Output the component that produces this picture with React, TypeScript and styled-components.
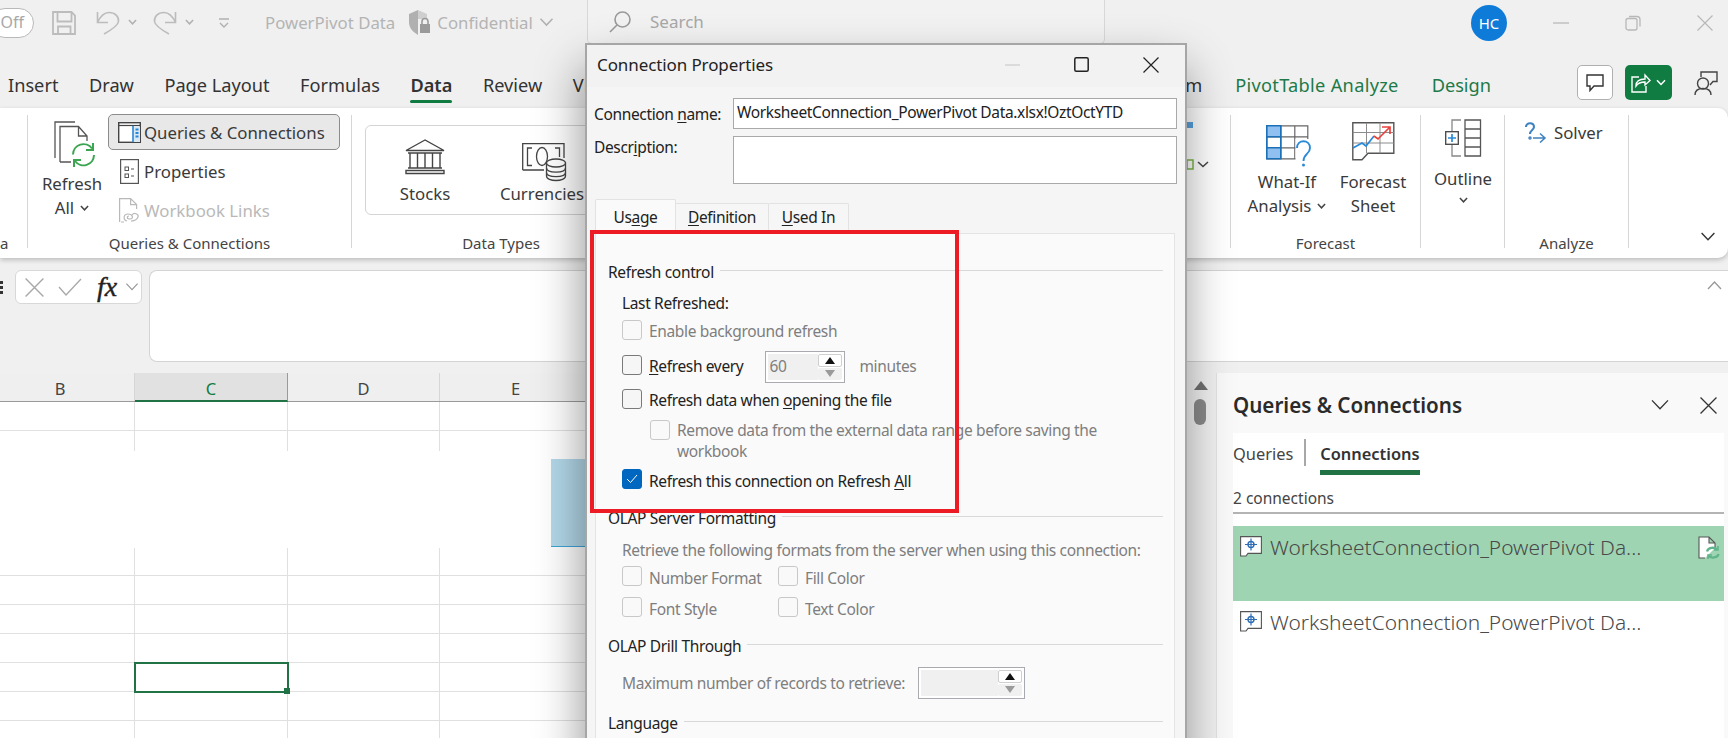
import React from "react"
import styled, { createGlobalStyle } from "styled-components"

const FONT = `"Noto Sans", "Open Sans", sans-serif`

const Global = createGlobalStyle`
  html, body { margin: 0; padding: 0; background: #f0f0f0; }
  body { font-family: ${FONT}; color: #333; overflow: hidden; }
  * { box-sizing: border-box; }
  svg { display: block; flex: none; }
`

const Page = styled.div`
  position: relative;
  width: 1728px;
  height: 738px;
  overflow: hidden;
  background: #f0f0f0;
  display: flex;
  flex-direction: column;
`

// Title bar
const TitleBar = styled.div`
  height: 45px;
  display: flex;
  flex: none;
`
const TitleLeft = styled.div`
  width: 587px;
  display: flex;
  align-items: center;
  color: #b4b4b4;
  font-size: 16.8px;
`
const AutoSave = styled.div`
  width: 44px;
  height: 30px;
  margin-left: -10px;
  border: 1px solid #b9b9b9;
  border-radius: 15px;
  background: #fff;
  color: #a8a8a8;
  font-size: 16px;
  line-height: 27px;
  text-align: right;
  padding-right: 9px;
`
const Slot = styled.div<{ $ml: number }>`
  margin-left: ${p => p.$ml}px;
  white-space: nowrap;
`
const SearchBox = styled.div`
  width: 518px;
  height: 44px;
  background: #f2f2f2;
  border: 1px solid #d8d8d8;
  border-top: none;
  border-radius: 0 0 5px 5px;
  display: flex;
  align-items: center;
  padding-left: 21px;
  gap: 19px;
  color: #a8a8a8;
  font-size: 17px;
`
const TitleRight = styled.div`
  flex: 1;
  display: flex;
  align-items: center;
  justify-content: flex-end;
  padding-right: 15px;
  gap: 56px;
`
const Avatar = styled.div`
  width: 36px;
  height: 36px;
  border-radius: 50%;
  background: #0f7bd8;
  color: #fff;
  font-size: 15px;
  line-height: 36px;
  text-align: center;
  margin-right: -10px;
`

// Tabs
const TabBar = styled.div`
  height: 63px;
  flex: none;
  display: flex;
  justify-content: space-between;
  padding: 20px 9px 0 8px;
`
const TabGroup = styled.div<{ $gap: number }>`
  display: flex;
  gap: ${p => p.$gap}px;
  align-items: flex-start;
`
const Tab = styled.div<{ $active?: boolean; $green?: boolean; $ls?: number }>`
  position: relative;
  font-size: 18.2px;
  line-height: 40px;
  letter-spacing: ${p => p.$ls ?? 0}px;
  white-space: nowrap;
  color: ${p => (p.$green ? "#1d7a48" : "#333")};
  font-weight: ${p => (p.$active ? 600 : 400)};
  ${p => p.$active && `
    &::after {
      content: "";
      position: absolute;
      left: 0;
      right: 0;
      top: 35px;
      height: 3px;
      background: #107c41;
      border-radius: 2px;
    }
  `}
`
const CommentBtn = styled.div`
  width: 36px;
  height: 35px;
  background: #fff;
  border: 1px solid #b0b0b0;
  border-radius: 5px;
  display: flex;
  align-items: center;
  justify-content: center;
`
const ShareBtn = styled.div`
  width: 47px;
  height: 35px;
  margin-left: 12px;
  background: #107c41;
  border-radius: 5px;
  display: flex;
  align-items: center;
  justify-content: center;
  gap: 5px;
`
const PersonSlot = styled.div`
  margin: 6px 0 0 22px;
`
const TabTools = styled.div`
  display: flex;
  align-items: flex-start;
  margin-left: 53px;
`

// Ribbon
const Ribbon = styled.div`
  position: relative;
  height: 150px;
  flex: none;
  background: #fff;
  border-radius: 0 10px 10px 0;
  box-shadow: 0 2px 5px rgba(0, 0, 0, 0.22);
  padding: 7px 0 10px;
  display: flex;
  font-size: 16.8px;
  color: #3a3a3a;
`
const Group = styled.div<{ $w: number; $pl?: number; $last?: boolean }>`
  width: ${p => p.$w}px;
  flex: none;
  height: 133px;
  padding-left: ${p => p.$pl ?? 0}px;
  display: flex;
  flex-direction: column;
  border-right: ${p => (p.$last ? "none" : "1px solid #d6d6d6")};
`
const GroupBody = styled.div`
  display: flex;
  flex: 1;
  min-height: 0;
`
const GroupLabel = styled.div<{ $ml?: number; $left?: boolean }>`
  flex: none;
  height: 18px;
  margin: 0 0 -4px ${p => p.$ml ?? 0}px;
  line-height: 18px;
  font-size: 15px;
  text-align: ${p => (p.$left ? "left" : "center")};
  color: #444;
  white-space: nowrap;
`
const BigButton = styled.div<{ $w: number; $ml?: number }>`
  width: ${p => p.$w}px;
  margin-left: ${p => p.$ml ?? 0}px;
  flex: none;
  display: flex;
  flex-direction: column;
  align-items: center;
  line-height: 24px;
  text-align: center;
  white-space: nowrap;
`
const IconBox = styled.div<{ $h: number; $pt: number; $dx?: number }>`
  height: ${p => p.$h}px;
  padding-top: ${p => p.$pt}px;
  margin-left: ${p => p.$dx ?? 0}px;
  flex: none;
`
const CaretLine = styled.div<{ $mt?: number }>`
  display: flex;
  align-items: center;
  justify-content: center;
  gap: 6px;
  margin-top: ${p => p.$mt ?? 0}px;
`
const SmallCol = styled.div`
  margin-left: 8px;
  margin-top: -1px;
  display: flex;
  flex-direction: column;
  gap: 3px;
`
const SmallButton = styled.div<{ $on?: boolean; $off?: boolean }>`
  width: 232px;
  height: 36px;
  display: flex;
  align-items: center;
  padding-left: 5px;
  white-space: nowrap;
  border-radius: 5px;
  border: 1px solid ${p => (p.$on ? "#8c8c8c" : "transparent")};
  background: ${p => (p.$on ? "#e8e8e8" : "transparent")};
  color: ${p => (p.$off ? "#b9b9b9" : "#3a3a3a")};
`
const SmallIcon = styled.div`
  width: 30px;
  flex: none;
  display: flex;
  justify-content: center;
`
const SolverSlot = styled.div`
  margin: -1px 0 0 20px;
  height: 36px;
  display: flex;
  align-items: center;
  gap: 7px;
`
const SubGroup = styled.div`
  width: 298px;
  display: flex;
  flex-direction: column;
  height: 100%;
`
const TypesCard = styled.div`
  margin: 10px 0 0 13px;
  width: 272px;
  height: 90px;
  border: 1px solid #d4d4d4;
  border-radius: 6px;
  display: flex;
  padding-left: 24px;
  gap: 47px;
`
const TypesItem = styled.div`
  display: flex;
  flex-direction: column;
  align-items: center;
  width: 70px;
`
const TypesLabel = styled(GroupLabel)`
  margin-top: auto;
`
const BehindBits = styled.div`
  margin-left: auto;
`
const CollapseSlot = styled.div`
  position: absolute;
  right: 12px;
  bottom: 16px;
`

// Formula row
const FormulaRow = styled.div`
  height: 115px;
  flex: none;
  padding-top: 12px;
  display: flex;
`
const Dots = styled.div`
  width: 15px;
  padding-top: 11px;
`
const FxBox = styled.div`
  width: 127px;
  height: 34px;
  background: #fff;
  border: 1px solid #d8d8d8;
  border-radius: 6px;
  display: flex;
  align-items: center;
  padding-left: 9px;
`
const FxLabel = styled.span`
  font-family: "Liberation Serif", serif;
  font-style: italic;
  font-weight: 400;
  font-size: 28px;
  line-height: 30px;
  color: #222;
  -webkit-text-stroke: 0.4px #222;
  margin: 0 8px 0 15px;
`
const FormulaInput = styled.div`
  margin-left: 7px;
  flex: 1;
  height: 92px;
  background: #fff;
  border: 1px solid #d4d4d4;
  border-right: none;
  border-radius: 8px 0 0 8px;
  display: flex;
  justify-content: flex-end;
  padding: 10px 6px 0 0;
`

// Sheet
const Workspace = styled.div`
  flex: 1;
  min-height: 0;
  display: flex;
`
const Sheet = styled.div`
  position: relative;
  width: 1187px;
  flex: none;
  overflow: hidden;
  background: #fff;
`
const HeaderRow = styled.div`
  display: flex;
  height: 29px;
  background: #efefef;
  border-bottom: 1px solid #9a9a9a;
`
const HeaderCell = styled.div<{ $w: number; $on?: boolean; $pr?: number }>`
  width: ${p => p.$w}px;
  flex: none;
  text-align: center;
  font-size: 16.5px;
  line-height: 31px;
  padding-right: ${p => p.$pr ?? 0}px;
  border-right: 1px solid ${p => (p.$on ? "#9a9a9a" : "#d6d6d6")};
  color: ${p => (p.$on ? "#107c41" : "#444")};
  background: ${p => (p.$on ? "#e1e1e1" : "transparent")};
  ${p => p.$on && "border-bottom: 2px solid #217346; height: 29px; margin-bottom: -1px;"}
`
const Row = styled.div`
  display: flex;
  height: 29px;
  &:first-of-type { height: 28px; }
`
const Cell = styled.div<{ $w: number; $sel?: boolean }>`
  position: relative;
  width: ${p => p.$w}px;
  flex: none;
  border-right: 1px solid #e0e0e0;
  border-bottom: 1px solid #e0e0e0;
  ${p => p.$sel && `
    outline: 2px solid #217346;
    outline-offset: -1px;
    z-index: 1;
    &::after {
      content: "";
      position: absolute;
      right: -3px;
      bottom: -3px;
      width: 6px;
      height: 6px;
      background: #217346;
    }
  `}
`
const WhiteOut = styled.div`
  position: absolute;
  left: 0;
  top: 78px;
  width: 551px;
  height: 97px;
  background: #fff;
  z-index: 2;
`
const HeaderBlock = styled.div`
  position: absolute;
  left: 551px;
  top: 86px;
  width: 50px;
  height: 88px;
  background: #b4d9ea;
  border-bottom: 1px solid #3fa5d6;
  z-index: 2;
`
const ScrollStrip = styled.div`
  width: 29px;
  flex: none;
  background: #f0f0f0;
  padding: 8px 0 0 7px;
`
const ScrollThumb = styled.div`
  width: 12px;
  height: 26px;
  margin-top: 9px;
  background: #8a8a8a;
  border-radius: 6px;
`

// Task pane
const TaskPane = styled.div`
  flex: 1;
  background: #f9f9f9;
  border-left: 1px solid #e2e2e2;
  padding-left: 16px;
  display: flex;
  flex-direction: column;
`
const PaneHead = styled.div`
  height: 60px;
  display: flex;
  align-items: center;
  padding: 4px 11px 0 0;
`
const PaneTitle = styled.div`
  flex: 1;
  font-size: 20.6px;
  font-weight: 600;
  color: #2b2b2b;
  white-space: nowrap;
`
const PaneIcons = styled.div`
  display: flex;
  gap: 30px;
  align-items: center;
`
const PaneBody = styled.div`
  flex: 1;
  margin-right: 4px;
  background: #fff;
`
const PaneTabs = styled.div`
  height: 42px;
  display: flex;
  align-items: flex-start;
  padding-top: 6px;
  font-size: 16.4px;
`
const PaneTab = styled.div<{ $on?: boolean }>`
  height: 36px;
  line-height: 30px;
  white-space: nowrap;
  font-weight: ${p => (p.$on ? 600 : 400)};
  color: ${p => (p.$on ? "#333" : "#444")};
  ${p => p.$on && "border-bottom: 5px solid #217346;"}
`
const PaneDivider = styled.div`
  width: 2px;
  height: 27px;
  background: #a8a8a8;
  margin: 0 14px 0 11px;
`
const PaneCount = styled.div`
  height: 39px;
  line-height: 46px;
  font-size: 15.5px;
  color: #444;
  border-bottom: 2px solid #b4b4b4;
`
const ConnList = styled.div`
  margin-top: 12px;
`
const ConnRow = styled.div<{ $on?: boolean }>`
  height: 75px;
  display: flex;
  align-items: flex-start;
  padding: 10px 4px 0 7px;
  gap: 8px;
  background: ${p => (p.$on ? "#9fd4b3" : "transparent")};
`
const ConnText = styled.div`
  flex: 1;
  font-size: 20.9px;
  line-height: 22px;
  font-weight: 300;
  color: #4a4a4a;
  white-space: nowrap;
`

// Dialog
const Dialog = styled.div`
  position: absolute;
  left: 585px;
  top: 43px;
  width: 602px;
  height: 720px;
  background: #f5f5f5;
  border: 2px solid #a6a6a6;
  box-shadow: -2px 24px 44px rgba(0, 0, 0, 0.42);
  z-index: 5;
  font-size: 15.5px;
  letter-spacing: -0.35px;
  color: #222;
`
const DialogHead = styled.div`
  height: 42px;
  padding: 0 0 3px 10px;
  background: #f2f2f2;
  display: flex;
  align-items: center;
`
const DialogTitle = styled.div`
  flex: 1;
  font-size: 17px;
  letter-spacing: -0.1px;
  white-space: nowrap;
`
const DialogBtns = styled.div`
  display: flex;
  align-items: center;
  gap: 54px;
  padding-right: 26px;
`
const Fields = styled.div`
  padding: 11px 8px 0 7px;
  display: grid;
  grid-template-columns: 139px 1fr;
  row-gap: 7px;
`
const FieldLabel = styled.div<{ $top?: boolean }>`
  white-space: nowrap;
  height: ${p => (p.$top ? 23 : 31)}px;
  line-height: ${p => (p.$top ? 23 : 33)}px;
`
const TextInput = styled.div<{ $h: number }>`
  height: ${p => p.$h}px;
  background: #fff;
  border: 1px solid #a9a9a9;
  padding-left: 3px;
  line-height: 27px;
  white-space: nowrap;
`
const DlgTabs = styled.div`
  display: flex;
  align-items: flex-end;
  margin: 16px 0 -1px 8px;
  height: 34px;
  position: relative;
`
const DlgTab = styled.div<{ $on?: boolean; $w: number }>`
  width: ${p => p.$w}px;
  height: ${p => (p.$on ? 35 : 31)}px;
  text-align: center;
  line-height: ${p => (p.$on ? 35 : 27)}px;
  background: ${p => (p.$on ? "#fafafa" : "#f6f6f6")};
  border: 1px solid #e2e2e2;
  border-bottom: none;
  border-radius: 2px 2px 0 0;
  margin-left: ${p => (p.$on ? 0 : -1)}px;
  z-index: ${p => (p.$on ? 1 : 0)};
`
const Panel = styled.div`
  margin: 0 10px 0 8px;
  height: 520px;
  background: #fafafa;
  border: 1px solid #e4e4e4;
  padding: 0 11px 0 13px;
`
const Key = styled.span`
  text-decoration: underline;
  text-underline-offset: 2px;
  text-decoration-thickness: 1px;
`
const SectionHead = styled.div<{ $mt: number }>`
  margin-top: ${p => p.$mt}px;
  margin-left: -1px;
  height: 24px;
  display: flex;
  align-items: center;
  gap: 6px;
  line-height: 24px;
  white-space: nowrap;
  &::after {
    content: "";
    flex: 1;
    height: 1px;
    background: #d8d8d8;
    margin-top: -3px;
  }
`
const Line = styled.div<{ $mt: number; $pl?: number; $muted?: boolean; $lh?: number }>`
  margin-top: ${p => p.$mt}px;
  margin-left: ${p => p.$pl ?? 13}px;
  min-height: 24px;
  display: flex;
  align-items: flex-start;
  line-height: ${p => p.$lh ?? 24}px;
  white-space: nowrap;
  color: ${p => (p.$muted ? "#7e7e7e" : "#222")};
`
const Box = styled.div<{ $off?: boolean; $on?: boolean }>`
  width: 20px;
  height: 20px;
  flex: none;
  margin-right: 7px;
  border-radius: 3px;
  border: 1px solid ${p => (p.$on ? "#0067c0" : p.$off ? "#c8c8c8" : "#7a7a7a")};
  background: ${p => (p.$on ? "#0067c0" : p.$off ? "#f9f9f9" : "#f6f6f6")};
  display: flex;
  align-items: center;
  justify-content: center;
`
const TwoLines = styled.div`
  line-height: 21px;
`
const Spin = styled.div<{ $w: number; $ml: number }>`
  width: ${p => p.$w}px;
  height: 32px;
  margin: -4px 0 -4px ${p => p.$ml}px;
  flex: none;
  border: 1px solid #a9a9b0;
  background: #fff;
  padding: 2px;
  display: flex;
`
const SpinField = styled.div`
  flex: 1;
  background: #f0f0f0;
  color: #7e7e7e;
  line-height: 24px;
  padding-left: 1px;
`
const SpinBtns = styled.div`
  width: 24px;
  display: flex;
  flex-direction: column;
  gap: 1px;
`
const SpinBtn = styled.div<{ $down?: boolean }>`
  flex: 1;
  background: ${p => (p.$down ? "#f0f0f0" : "#fff")};
  border: 1px solid ${p => (p.$down ? "#f0f0f0" : "#cfcfcf")};
  border-radius: 2px;
  display: flex;
  align-items: center;
  justify-content: center;
`
const Arrow = styled.div<{ $down?: boolean }>`
  width: 0;
  height: 0;
  border-left: 5px solid transparent;
  border-right: 5px solid transparent;
  ${p => (p.$down ? "border-top: 7px solid #9a9a9a;" : "border-bottom: 7px solid #111;")}
`
const CheckGrid = styled.div<{ $mt: number }>`
  margin: ${p => p.$mt}px 0 0 13px;
  display: grid;
  grid-template-columns: 156px 1fr;
  grid-auto-rows: 24px;
  row-gap: 7px;
  color: #7e7e7e;
`
const CheckItem = styled.div`
  display: flex;
  line-height: 24px;
  white-space: nowrap;
`
const Muted = styled.span`
  color: #7e7e7e;
  margin-left: 14px;
`
const Highlight = styled.div`
  position: absolute;
  left: 590px;
  top: 230px;
  width: 369px;
  height: 283px;
  border: 4px solid #ed1c24;
  z-index: 6;
`

const Caret = ({ c = "#555", s = 10, w = 1.5 }: { c?: string; s?: number; w?: number }) => (
  <svg width={s} height={s * 0.7} viewBox="0 0 10 7" fill="none" stroke={c} strokeWidth={w}>
    <path d="M1 1.200 5 5.400 9 1.200" vectorEffect="non-scaling-stroke" />
  </svg>
)
const Cross = ({ c, s }: { c: string; s: number }) => (
  <svg width={s} height={s} viewBox="0 0 16 16" fill="none" stroke={c} strokeWidth="1.200"><path d="M.5.5l15 15M15.500.5l-15 15" /></svg>
)

const SaveIcon = () => (
  <svg width="24" height="24" viewBox="0 0 24 24" fill="none" stroke="#bcbcbc" strokeWidth="1.800"><path d="M1 1h18.500L23 4.500V23H1z" /><path d="M5.500 1v9.500h14V1M6 23v-7.500h12.500V23" /></svg>
)
const UndoIcon = ({ flip }: { flip?: boolean }) => (
  <svg width="24" height="24" viewBox="0 0 24 24" fill="none" stroke="#bcbcbc" strokeWidth="1.600" style={flip ? { transform: "scaleX(-1)" } : undefined}>
    <path d="M1.500 1v10.500H12M1.500 11.500C5 4 9 1.500 13 1.500c6 0 10 4 9.500 9C22 14 17 18 8 23" />
  </svg>
)
const QatIcon = () => (
  <svg width="12" height="12" viewBox="0 0 12 12" fill="none" stroke="#b0b0b0" strokeWidth="1.400"><path d="M1 2h10M2 6l4 4 4-4" /></svg>
)
const ShieldIcon = () => (
  <svg width="23" height="27" viewBox="0 0 23 27"><path d="M10 1 1 5v8c0 6 4 10 9 13V1z" fill="#b0b0b0" /><path d="M10 1l9 4v5h-9z" fill="#cfcfcf" /><path d="M12 15h10v9H12z" fill="#9a9a9a" /><path d="M14 15v-2.500c0-4 6-4 6 0V15" fill="none" stroke="#9a9a9a" strokeWidth="1.600" /></svg>
)
const SearchIcon = () => (
  <svg width="22" height="22" viewBox="0 0 22 22" fill="none" stroke="#9a9a9a" strokeWidth="1.600"><circle cx="13.500" cy="8.500" r="7.500" /><path d="M8 14 1 21" /></svg>
)
const RestoreIcon = () => (
  <svg width="16" height="16" viewBox="0 0 16 16" fill="none" stroke="#b8b8b8" strokeWidth="1.300"><rect x="1" y="3.500" width="11" height="11.500" rx="2" /><path d="M4 1.500h8c1.700 0 3 1.300 3 3v7" /></svg>
)
const CommentIcon = () => (
  <svg width="18" height="18" viewBox="0 0 18 18" fill="none" stroke="#333" strokeWidth="1.400"><path d="M1 1h16v11H8l-4 4.500V12H1z" /></svg>
)
const ShareIcon = () => (
  <svg width="20" height="20" viewBox="0 0 20 20" fill="none" stroke="#fff" strokeWidth="1.400"><path d="M8 4H1v15h14v-6" /><path d="M5 13c0-5 4-7 9-7V2l5 5.500L14 12V9c-4 0-7 1-9 4z" /></svg>
)
const PersonIcon = () => (
  <svg width="25" height="24" viewBox="0 0 25 24" fill="none" stroke="#444" strokeWidth="1.400"><path d="M7 6V1h16v9.500h-4l-3 3.500" /><circle cx="9" cy="12.500" r="5.500" fill="#f0f0f0" /><path d="M1 24c0-4 3-6.500 8-6.500s8 2.500 8 6.500" /></svg>
)
const RefreshAllIcon = () => (
  <svg width="44" height="47" viewBox="0 0 44 47" fill="none" stroke="#555" strokeWidth="1.300">
    <path d="M1 37V1h20M6 41V5.500h18.500L33 15v5M24.500 5.500V15H33M6 41h11" />
    <g stroke="#3ca552" strokeWidth="2">
      <path d="M19 33.500a10.500 10.500 0 0 1 19-6" /><path d="M39 22v7h-7" />
      <path d="M40 34a10.500 10.500 0 0 1-19 6" /><path d="M20 46v-7h7" />
    </g>
  </svg>
)
const PaneIcon = () => (
  <svg width="23" height="21" viewBox="0 0 23 21" fill="none"><rect x=".7" y=".7" width="21.600" height="19.600" fill="#fff" stroke="#444" strokeWidth="1.400" /><path d="M.6 3.500h21.800" stroke="#444" strokeWidth="1.200" /><rect x="15" y="4.500" width="7" height="15.500" fill="#d7e8f7" /><path d="M15 4v16" stroke="#2a86d5" strokeWidth="1.600" /><path d="M17.500 7.500h3M17.500 11h3M17.500 14.500h3" stroke="#2a86d5" strokeWidth="1.800" /></svg>
)
const PropsIcon = () => (
  <svg width="19" height="25" viewBox="0 0 19 25" fill="none" stroke="#555" strokeWidth="1.200"><rect x=".6" y=".6" width="17.800" height="23.800" /><rect x="5" y="8" width="3.500" height="3.500" strokeWidth="1" /><rect x="5" y="15" width="3.500" height="3.500" strokeWidth="1" /><path d="M11 10h3M11 17h3" /></svg>
)
const LinksIcon = () => (
  <svg width="21" height="25" viewBox="0 0 21 25" fill="none" stroke="#b9b9b9" strokeWidth="1.200"><path d="M.6 24V.6h11l6 6V11M11.600.6v6h6" /><path d="M2 24h3M8 23c-4-1-4-7 1-7s6 5 2 5-3-3-1-3M13 17c2-3 7-1 6 2s-5 4-7 4" /></svg>
)
const StocksIcon = () => (
  <svg width="41" height="36" viewBox="0 0 41 36" fill="none" stroke="#444" strokeWidth="1.400"><path d="M20 1 1 11.500h38z" /><path d="M3 14h34M5 14v15M12.500 14v15M20 14v15M27.500 14v15M35 14v15M3 29h34M1 34.500h38v-3H1z" /></svg>
)
const CurrenciesIcon = () => (
  <svg width="46" height="39" viewBox="0 0 46 39" fill="none" stroke="#444" strokeWidth="1.300">
    <path d="M.7 27V.7H42V15M.7 27H22" />
    <path d="M10 5H5.500v17.500H10M33 5h4.500v9" />
    <ellipse cx="20" cy="13.500" rx="5.500" ry="9" />
    <g fill="#fff"><path d="M24.500 20v13c0 6 19 6 19 0V20z" /><ellipse cx="34" cy="20" rx="9.500" ry="4" /><path d="M24.500 25c0 5.500 19 5.500 19 0M24.500 29.500c0 5.500 19 5.500 19 0" fill="none" /></g>
  </svg>
)
const BitsIcon = () => (
  <svg width="44" height="70" viewBox="0 0 44 70" fill="none">
    <rect x="1" y="7" width="6" height="6" fill="#5aa2dd" />
    <rect x="1" y="45" width="6" height="9" stroke="#7ab648" strokeWidth="1.500" />
    <path d="M12 47l5 4.500 5-4.500" stroke="#444" strokeWidth="1.500" />
  </svg>
)
const WhatIfIcon = () => (
  <svg width="46" height="42" viewBox="0 0 46 42" fill="none">
    <path d="M.8.8h41v33H.8zM14.800.8v33M28.800.8v33M.8 11.800h41M.8 22.800h41" stroke="#666" strokeWidth="1.200" />
    <rect x="1" y="1" width="13.600" height="10.600" fill="#8fc0ef" /><rect x="1" y="23" width="13.600" height="10.600" fill="#8fc0ef" />
    <path d="M.8.800h14v33H.8zM.8 11.800h14M.8 22.800h14" stroke="#1c70b8" strokeWidth="1.600" />
    <rect x="29.500" y="14" width="15" height="21" fill="#fff" />
    <path d="M31 23c0-9 13-9 13 0 0 6-6.500 6-6.500 13" stroke="#2a8ad8" strokeWidth="1.900" /><circle cx="37.500" cy="40" r="1.500" fill="#2a8ad8" />
  </svg>
)
const ForecastIcon = () => (
  <svg width="43" height="39" viewBox="0 0 43 39" fill="none">
    <path d="M.8 31V.8h41v30.500H16l-6 6.500H.8z" stroke="#555" strokeWidth="1.400" />
    <path d="M.8 10.500h41M.8 21h41M14.500.8v30.500M28 .8v30.500" stroke="#8c8c8c" />
    <path d="M1 26l9-5 4 3 8-10" stroke="#2a8ad8" strokeWidth="1.700" />
    <path d="M22 14l4 3 12-12M30 5h8v7" stroke="#e8423c" strokeWidth="1.700" />
  </svg>
)
const OutlineIcon = () => (
  <svg width="37" height="39" viewBox="0 0 37 39" fill="none">
    <path d="M16 1H7v12M7 25v12h9" stroke="#888" strokeWidth="1.300" />
    <path d="M20 1h15.500v36H20zM20 10h15.500M20 19h15.500M20 28h15.500" stroke="#555" strokeWidth="1.300" />
    <rect x=".7" y="12.700" width="12.600" height="12.600" fill="#fff" stroke="#444" strokeWidth="1.300" /><path d="M7 15v8M3 19h8" stroke="#2a8ad8" strokeWidth="1.700" />
  </svg>
)
const SolverIcon = () => (
  <svg width="22" height="21" viewBox="0 0 22 21" fill="none" stroke="#3f82c0" strokeWidth="2.100"><path d="M1 5c0-5 8-5 8 0 0 3-4 3-4 7" /><circle cx="5" cy="16" r=".7" /><path d="M8 16h12M15 11.500l5 4.500-5 4.500" strokeWidth="1.500" /></svg>
)
const ConnIcon = () => (
  <svg width="22" height="21" viewBox="0 0 22 21" fill="none"><path d="M.6 18V.6h20.800v16.800H8L6 20H.6z" fill="#fff" stroke="#555" strokeWidth="1.100" /><circle cx="11" cy="8.500" r="3" stroke="#2f6eb5" strokeWidth="1.400" /><path d="M11 2.500v12M5 8.500h12" stroke="#2f6eb5" strokeWidth="1.200" /></svg>
)
const DocRefreshIcon = () => (
  <svg width="22" height="23" viewBox="0 0 22 23" fill="none"><path d="M7 22H1V1h10l6 6v5M11 1v6h6" stroke="#555" strokeWidth="1.100" fill="#fff" /><g stroke="#5fb58b" strokeWidth="2.300"><path d="M9 15.500c1-4 7-5 10-2M20.500 18c-1 4-7 4.500-10 2" /><path d="M20 10v4h-4M10 23v-4h4" strokeWidth="1.600" /></g></svg>
)
const CheckMark = () => (
  <svg width="12" height="10" viewBox="0 0 12 10" fill="none" stroke="#fff" strokeWidth="1"><path d="M1 5l3.500 3.500L11 1" /></svg>
)

const COLS = [135, 153, 152, 152, 152, 152, 152, 152]
const ROWS = Array.from({ length: 12 }, (_, i) => i)

const App: React.FC = () => (
  <Page>
    <Global />
    <TitleBar>
      <TitleLeft>
        <AutoSave>Off</AutoSave>
        <Slot $ml={18}><SaveIcon /></Slot>
        <Slot $ml={20}><UndoIcon /></Slot>
        <Slot $ml={8}><Caret c="#b0b0b0" s={9} /></Slot>
        <Slot $ml={16}><UndoIcon flip /></Slot>
        <Slot $ml={8}><Caret c="#b0b0b0" s={9} /></Slot>
        <Slot $ml={24}><QatIcon /></Slot>
        <Slot $ml={35}>PowerPivot Data</Slot>
        <Slot $ml={13}><ShieldIcon /></Slot>
        <Slot $ml={6}>Confidential</Slot>
        <Slot $ml={6}><Caret c="#b0b0b0" s={15} /></Slot>
      </TitleLeft>
      <SearchBox><SearchIcon />Search</SearchBox>
      <TitleRight>
        <Avatar>HC</Avatar>
        <svg width="16" height="2" viewBox="0 0 16 2"><path d="M0 1h16" stroke="#b8b8b8" strokeWidth="1.300" /></svg>
        <RestoreIcon />
        <Cross c="#b8b8b8" s={16} />
      </TitleRight>
    </TitleBar>

    <TabBar>
      <TabGroup $gap={30.5}>
        <Tab>Insert</Tab>
        <Tab>Draw</Tab>
        <Tab>Page Layout</Tab>
        <Tab>Formulas</Tab>
        <Tab $active>Data</Tab>
        <Tab>Review</Tab>
        <Tab>View</Tab>
      </TabGroup>
      <TabGroup $gap={33}>
        <Tab>Team</Tab>
        <Tab $green $ls={0.3}>PivotTable Analyze</Tab>
        <Tab $green>Design</Tab>
        <TabTools>
          <CommentBtn><CommentIcon /></CommentBtn>
          <ShareBtn><ShareIcon /><Caret c="#fff" s={10} /></ShareBtn>
          <PersonSlot><PersonIcon /></PersonSlot>
        </TabTools>
      </TabGroup>
    </TabBar>

    <Ribbon>
      <Group $w={28}>
        <GroupBody />
        <GroupLabel $left>a</GroupLabel>
      </Group>
      <Group $w={324} $pl={16}>
        <GroupBody>
          <BigButton $w={56}>
            <IconBox $h={57} $pt={6} $dx={8}><RefreshAllIcon /></IconBox>
            <div>Refresh</div>
            <CaretLine>All <Caret c="#444" s={9} /></CaretLine>
          </BigButton>
          <SmallCol>
            <SmallButton $on><SmallIcon><PaneIcon /></SmallIcon>Queries &amp; Connections</SmallButton>
            <SmallButton><SmallIcon><PropsIcon /></SmallIcon>Properties</SmallButton>
            <SmallButton $off><SmallIcon><LinksIcon /></SmallIcon>Workbook Links</SmallButton>
          </SmallCol>
        </GroupBody>
        <GroupLabel $ml={-16}>Queries &amp; Connections</GroupLabel>
      </Group>
      <Group $w={879}>
        <GroupBody>
          <SubGroup>
            <TypesCard>
              <TypesItem><IconBox $h={56} $pt={13}><StocksIcon /></IconBox>Stocks</TypesItem>
              <TypesItem><IconBox $h={56} $pt={17} $dx={6}><CurrenciesIcon /></IconBox>Currencies</TypesItem>
            </TypesCard>
            <TypesLabel>Data Types</TypesLabel>
          </SubGroup>
          <BehindBits><BitsIcon /></BehindBits>
        </GroupBody>
      </Group>
      <Group $w={190} $pl={16}>
        <GroupBody>
          <BigButton $w={80}>
            <IconBox $h={55} $pt={10} $dx={4}><WhatIfIcon /></IconBox>
            <div>What-If</div>
            <CaretLine>Analysis <Caret c="#444" s={9} /></CaretLine>
          </BigButton>
          <BigButton $w={66} $ml={13}>
            <IconBox $h={55} $pt={7}><ForecastIcon /></IconBox>
            <div>Forecast</div>
            <div>Sheet</div>
          </BigButton>
        </GroupBody>
        <GroupLabel $ml={-16}>Forecast</GroupLabel>
      </Group>
      <Group $w={84} $pl={12}>
        <GroupBody>
          <BigButton $w={60}>
            <IconBox $h={52} $pt={4}><OutlineIcon /></IconBox>
            <div>Outline</div>
            <CaretLine $mt={6}><Caret c="#444" s={9} /></CaretLine>
          </BigButton>
        </GroupBody>
      </Group>
      <Group $w={124}>
        <GroupBody>
          <SolverSlot><SolverIcon />Solver</SolverSlot>
        </GroupBody>
        <GroupLabel>Analyze</GroupLabel>
      </Group>
      <CollapseSlot><Caret c="#333" s={16} w={1.400} /></CollapseSlot>
    </Ribbon>

    <FormulaRow>
      <Dots>
        <svg width="3" height="13" viewBox="0 0 3 13" fill="#333"><rect width="3" height="3" /><rect y="5" width="3" height="3" /><rect y="10" width="3" height="3" /></svg>
      </Dots>
      <FxBox>
        <Cross c="#a8a8a8" s={19} />
        <Slot $ml={14}>
          <svg width="24" height="18" viewBox="0 0 24 18" fill="none" stroke="#a8a8a8" strokeWidth="1.300"><path d="M1 9l7 8L23 1" /></svg>
        </Slot>
        <FxLabel>fx</FxLabel>
        <Caret c="#999" s={14} w={1.200} />
      </FxBox>
      <FormulaInput>
        <svg width="15" height="9" viewBox="0 0 15 9" fill="none" stroke="#999" strokeWidth="1.300"><path d="M1 8l6.500-7L14 8" /></svg>
      </FormulaInput>
    </FormulaRow>

    <Workspace>
      <Sheet>
        <HeaderRow>
          <HeaderCell $w={135} $pr={14}>B</HeaderCell>
          <HeaderCell $w={153} $on>C</HeaderCell>
          <HeaderCell $w={152}>D</HeaderCell>
          <HeaderCell $w={152}>E</HeaderCell>
        </HeaderRow>
        {ROWS.map(r => (
          <Row key={r}>
            {COLS.map((w, c) => <Cell key={c} $w={w} $sel={r === 9 && c === 1} />)}
          </Row>
        ))}
        <WhiteOut />
        <HeaderBlock />
      </Sheet>
      <ScrollStrip>
        <svg width="14" height="9" viewBox="0 0 14 9" fill="#707070"><path d="M7 0l7 9H0z" /></svg>
        <ScrollThumb />
      </ScrollStrip>
      <TaskPane>
        <PaneHead>
          <PaneTitle>Queries &amp; Connections</PaneTitle>
          <PaneIcons>
            <Caret c="#333" s={20} w={1.300} />
            <Cross c="#333" s={17} />
          </PaneIcons>
        </PaneHead>
        <PaneBody>
          <PaneTabs>
            <PaneTab>Queries</PaneTab>
            <PaneDivider />
            <PaneTab $on>Connections</PaneTab>
          </PaneTabs>
          <PaneCount>2 connections</PaneCount>
          <ConnList>
            <ConnRow $on>
              <ConnIcon />
              <ConnText>WorksheetConnection_PowerPivot Da...</ConnText>
              <DocRefreshIcon />
            </ConnRow>
            <ConnRow>
              <ConnIcon />
              <ConnText>WorksheetConnection_PowerPivot Da...</ConnText>
            </ConnRow>
          </ConnList>
        </PaneBody>
      </TaskPane>
    </Workspace>

    <Dialog>
      <DialogHead>
        <DialogTitle>Connection Properties</DialogTitle>
        <DialogBtns>
          <svg width="15" height="2" viewBox="0 0 15 2"><path d="M0 1h15" stroke="#c4c4c4" /></svg>
          <svg width="15" height="15" viewBox="0 0 15 15" fill="none" stroke="#222" strokeWidth="1.500"><rect x=".8" y=".8" width="13.400" height="13.400" rx="1.500" /></svg>
          <Cross c="#222" s={16} />
        </DialogBtns>
      </DialogHead>
      <Fields>
        <FieldLabel>Connection <Key>n</Key>ame:</FieldLabel>
        <TextInput $h={31}>WorksheetConnection_PowerPivot Data.xlsx!OztOctYTD</TextInput>
        <FieldLabel $top>Descr<Key>i</Key>ption:</FieldLabel>
        <TextInput $h={48} />
      </Fields>
      <DlgTabs>
        <DlgTab $on $w={81}>Us<Key>a</Key>ge</DlgTab>
        <DlgTab $w={94}><Key>D</Key>efinition</DlgTab>
        <DlgTab $w={81}><Key>U</Key>sed In</DlgTab>
      </DlgTabs>
      <Panel>
        <SectionHead $mt={26}>Refresh control</SectionHead>
        <Line $mt={7}>Last Refreshed:</Line>
        <Line $mt={5} $muted $lh={22}><Box $off />Enable background refresh</Line>
        <Line $mt={11} $lh={22}>
          <Box /><span><Key>R</Key>efresh every</span>
          <Spin $w={80} $ml={22}>
            <SpinField>60</SpinField>
            <SpinBtns>
              <SpinBtn><Arrow /></SpinBtn>
              <SpinBtn $down><Arrow $down /></SpinBtn>
            </SpinBtns>
          </Spin>
          <Muted>minutes</Muted>
        </Line>
        <Line $mt={10} $lh={22}><Box /><span>Refresh data when <Key>o</Key>pening the file</span></Line>
        <Line $mt={7} $pl={41} $muted>
          <Box $off />
          <TwoLines>Remove data from the external data range before saving the<br />workbook</TwoLines>
        </Line>
        <Line $mt={7}><Box $on><CheckMark /></Box><span>Refresh this connection on Refresh <Key>A</Key>ll</span></Line>
        <SectionHead $mt={13}>OLAP Server Formatting</SectionHead>
        <Line $mt={8} $muted>Retrieve the following formats from the server when using this connection:</Line>
        <CheckGrid $mt={4}>
          <CheckItem><Box $off />Number Format</CheckItem>
          <CheckItem><Box $off />Fill Color</CheckItem>
          <CheckItem><Box $off />Font Style</CheckItem>
          <CheckItem><Box $off />Text Color</CheckItem>
        </CheckGrid>
        <SectionHead $mt={13}>OLAP Drill Through</SectionHead>
        <Line $mt={13} $muted>
          Maximum number of records to retrieve:
          <Spin $w={107} $ml={13}>
            <SpinField />
            <SpinBtns>
              <SpinBtn><Arrow /></SpinBtn>
              <SpinBtn $down><Arrow $down /></SpinBtn>
            </SpinBtns>
          </Spin>
        </Line>
        <SectionHead $mt={16}>Language</SectionHead>
      </Panel>
    </Dialog>
    <Highlight />
  </Page>
)

export default App
